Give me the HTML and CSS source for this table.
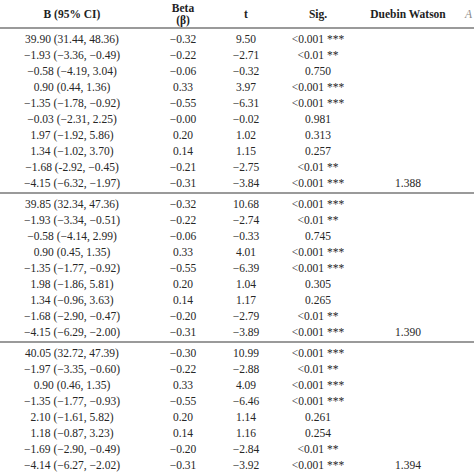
FILE: index.html
```html
<!DOCTYPE html>
<html>
<head>
<meta charset="utf-8">
<link rel="stylesheet" href="styles.css">
</head>
<body>
<table class="stats">
  <colgroup>
    <col class="c-b"><col class="c-beta"><col class="c-t"><col class="c-sig"><col class="c-dw"><col class="c-adj">
  </colgroup>
  <thead>
    <tr>
      <th>B (95% CI)</th>
      <th>Beta<br>(β)</th>
      <th>t</th>
      <th>Sig.</th>
      <th>Duebin Watson</th>
      <th class="adj">A</th>
    </tr>
  </thead>
  <tbody class="sec">
    <tr><td>39.90 (31.44, 48.36)</td><td>−0.32</td><td>9.50</td><td>&lt;0.001 ***</td><td></td><td></td></tr>
    <tr><td>−1.93 (−3.36, −0.49)</td><td>−0.22</td><td>−2.71</td><td>&lt;0.01 **</td><td></td><td></td></tr>
    <tr><td>−0.58 (−4.19, 3.04)</td><td>−0.06</td><td>−0.32</td><td>0.750</td><td></td><td></td></tr>
    <tr><td>0.90 (0.44, 1.36)</td><td>0.33</td><td>3.97</td><td>&lt;0.001 ***</td><td></td><td></td></tr>
    <tr><td>−1.35 (−1.78, −0.92)</td><td>−0.55</td><td>−6.31</td><td>&lt;0.001 ***</td><td></td><td></td></tr>
    <tr><td>−0.03 (−2.31, 2.25)</td><td>−0.00</td><td>−0.02</td><td>0.981</td><td></td><td></td></tr>
    <tr><td>1.97 (−1.92, 5.86)</td><td>0.20</td><td>1.02</td><td>0.313</td><td></td><td></td></tr>
    <tr><td>1.34 (−1.02, 3.70)</td><td>0.14</td><td>1.15</td><td>0.257</td><td></td><td></td></tr>
    <tr><td>−1.68 (-2.92, −0.45)</td><td>−0.21</td><td>−2.75</td><td>&lt;0.01 **</td><td></td><td></td></tr>
    <tr><td>−4.15 (−6.32, −1.97)</td><td>−0.31</td><td>−3.84</td><td>&lt;0.001 ***</td><td>1.388</td><td></td></tr>
  </tbody>
  <tbody class="sec">
    <tr><td>39.85 (32.34, 47.36)</td><td>−0.32</td><td>10.68</td><td>&lt;0.001 ***</td><td></td><td></td></tr>
    <tr><td>−1.93 (−3.34, −0.51)</td><td>−0.22</td><td>−2.74</td><td>&lt;0.01 **</td><td></td><td></td></tr>
    <tr><td>−0.58 (−4.14, 2.99)</td><td>−0.06</td><td>−0.33</td><td>0.745</td><td></td><td></td></tr>
    <tr><td>0.90 (0.45, 1.35)</td><td>0.33</td><td>4.01</td><td>&lt;0.001 ***</td><td></td><td></td></tr>
    <tr><td>−1.35 (−1.77, −0.92)</td><td>−0.55</td><td>−6.39</td><td>&lt;0.001 ***</td><td></td><td></td></tr>
    <tr><td>1.98 (−1.86, 5.81)</td><td>0.20</td><td>1.04</td><td>0.305</td><td></td><td></td></tr>
    <tr><td>1.34 (−0.96, 3.63)</td><td>0.14</td><td>1.17</td><td>0.265</td><td></td><td></td></tr>
    <tr><td>−1.68 (−2.90, −0.47)</td><td>−0.20</td><td>−2.79</td><td>&lt;0.01 **</td><td></td><td></td></tr>
    <tr><td>−4.15 (−6.29, −2.00)</td><td>−0.31</td><td>−3.89</td><td>&lt;0.001 ***</td><td>1.390</td><td></td></tr>
  </tbody>
  <tbody class="sec">
    <tr><td>40.05 (32.72, 47.39)</td><td>−0.30</td><td>10.99</td><td>&lt;0.001 ***</td><td></td><td></td></tr>
    <tr><td>−1.97 (−3.35, −0.60)</td><td>−0.22</td><td>−2.88</td><td>&lt;0.01 **</td><td></td><td></td></tr>
    <tr><td>0.90 (0.46, 1.35)</td><td>0.33</td><td>4.09</td><td>&lt;0.001 ***</td><td></td><td></td></tr>
    <tr><td>−1.35 (−1.77, −0.93)</td><td>−0.55</td><td>−6.46</td><td>&lt;0.001 ***</td><td></td><td></td></tr>
    <tr><td>2.10 (−1.61, 5.82)</td><td>0.20</td><td>1.14</td><td>0.261</td><td></td><td></td></tr>
    <tr><td>1.18 (−0.87, 3.23)</td><td>0.14</td><td>1.16</td><td>0.254</td><td></td><td></td></tr>
    <tr><td>−1.69 (−2.90, −0.49)</td><td>−0.20</td><td>−2.84</td><td>&lt;0.01 **</td><td></td><td></td></tr>
    <tr><td>−4.14 (−6.27, −2.02)</td><td>−0.31</td><td>−3.92</td><td>&lt;0.001 ***</td><td>1.394</td><td></td></tr>
  </tbody>
</table>
</body>
</html>
```

FILE: styles.css
```css
html, body {
  margin: 0;
  padding: 0;
  background: #ffffff;
  overflow: hidden;
}

body {
  width: 474px;
  height: 474px;
  font-family: "Liberation Serif", "Times New Roman", serif;
  font-size: 11.5px;
  color: #262626;
}

.stats {
  border-collapse: collapse;
  table-layout: fixed;
  width: 474px;
}

.c-b { width: 144px; }
.c-beta { width: 78px; }
.c-t { width: 48px; }
.c-sig { width: 96px; }
.c-dw { width: 84px; }
.c-adj { width: 24px; }

.stats th {
  height: 27px;
  padding: 0;
  font-weight: bold;
  line-height: 12px;
  text-align: center;
  vertical-align: middle;
  color: #1e1e1e;
  white-space: nowrap;
}

.stats th.adj {
  text-align: left;
  padding-left: 15px;
  font-weight: normal;
  font-style: italic;
  color: #8a8a8a;
}

.stats td {
  height: 16px;
  padding: 0;
  line-height: 16px;
  text-align: center;
  white-space: nowrap;
}

.sec {
  border-top: 2px solid #9a9a9a;
}

.sec tr:first-child td {
  padding-top: 2px;
}

.sec tr:last-child td {
  padding-bottom: 1px;
}
```
